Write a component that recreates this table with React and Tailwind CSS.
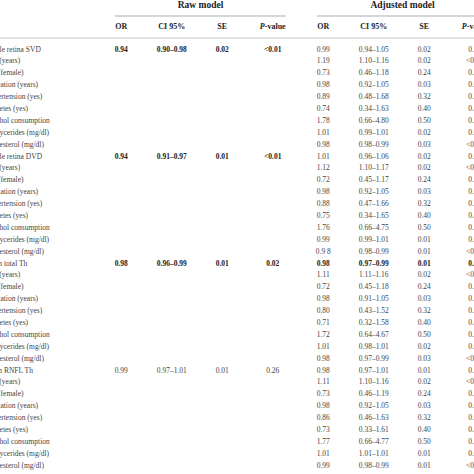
const covariates = [
  "Age (years)",
  "Sex (female)",
  "Education (years)",
  "Hypertension (yes)",
  "Diabetes (yes)",
  "Alcohol consumption",
  "Triglycerides (mg/dl)",
  "Cholesterol (mg/dl)",
];

const groups = [
  {
    label: "Whole retina SVD",
    raw: ["0.94", "0.90–0.98", "0.02", "<0.01"],
    rawBold: true,
    adj: [
      ["0.99", "0.94–1.05", "0.02", "0.74"],
      ["1.19", "1.10–1.16", "0.02", "<0.01"],
      ["0.73", "0.46–1.18", "0.24", "0.20"],
      ["0.98", "0.92–1.05", "0.03", "0.62"],
      ["0.89", "0.48–1.68", "0.32", "0.73"],
      ["0.74", "0.34–1.63", "0.40", "0.46"],
      ["1.78", "0.66–4.80", "0.50", "0.25"],
      ["1.01", "0.99–1.01", "0.02", "0.62"],
      ["0.98", "0.98–0.99", "0.03", "<0.01"],
    ],
  },
  {
    label: "Whole retina DVD",
    raw: ["0.94", "0.91–0.97", "0.01", "<0.01"],
    rawBold: true,
    adj: [
      ["1.01", "0.96–1.06", "0.02", "0.68"],
      ["1.12", "1.10–1.17", "0.02", "<0.01"],
      ["0.72", "0.45–1.17", "0.24", "0.18"],
      ["0.98", "0.92–1.05", "0.03", "0.61"],
      ["0.88", "0.47–1.66", "0.32", "0.70"],
      ["0.75", "0.34–1.65", "0.40", "0.47"],
      ["1.76", "0.66–4.75", "0.50", "0.26"],
      ["0.99", "0.99–1.01", "0.01", "0.64"],
      ["0.9 8", "0.98–0.99", "0.01", "<0.01"],
    ],
  },
  {
    label: "Mean total Th",
    raw: ["0.98", "0.96–0.99", "0.01", "0.02"],
    rawBold: true,
    adjBoldFirst: true,
    adj: [
      ["0.98", "0.97–0.99", "0.01", "0.03"],
      ["1.11", "1.11–1.16", "0.02", "<0.01"],
      ["0.72", "0.45–1.18", "0.24", "0.19"],
      ["0.98", "0.91–1.05", "0.03", "0.58"],
      ["0.80", "0.43–1.52", "0.32", "0.50"],
      ["0.71", "0.32–1.58", "0.40", "0.41"],
      ["1.72", "0.64–4.67", "0.50", "0.28"],
      ["1.01", "0.98–1.01", "0.02", "0.66"],
      ["0.98", "0.97–0.99", "0.03", "<0.01"],
    ],
  },
  {
    label: "Mean RNFL Th",
    raw: ["0.99", "0.97–1.01", "0.01", "0.26"],
    rawBold: false,
    adj: [
      ["0.98", "0.97–1.01", "0.01", "0.31"],
      ["1.11", "1.10–1.16", "0.02", "<0.01"],
      ["0.73", "0.46–1.19", "0.24", "0.21"],
      ["0.98", "0.92–1.05", "0.03", "0.60"],
      ["0.86", "0.46–1.63", "0.32", "0.65"],
      ["0.73", "0.33–1.61", "0.40", "0.44"],
      ["1.77", "0.66–4.77", "0.50", "0.26"],
      ["1.01", "1.01–1.01", "0.01", "0.63"],
      ["0.99", "0.98–0.99", "0.01", "<0.01"],
    ],
  },
];

const rowGrid = "grid grid-cols-[111px_repeat(8,50.5px)] h-[11.9px] leading-[11.9px]";

function Cell({ children, bold }) {
  return (
    <div className={`text-center whitespace-nowrap ${bold ? "font-bold text-[#222]" : ""}`}>
      {children}
    </div>
  );
}

function Row({ label, raw = ["", "", "", ""], adj, rawBold, adjBold }) {
  return (
    <div className={rowGrid}>
      <div className="whitespace-nowrap">{label}</div>
      {raw.map((v, i) => (
        <Cell key={"r" + i} bold={rawBold}>{v}</Cell>
      ))}
      {adj.map((v, i) => (
        <Cell key={"a" + i} bold={adjBold}>{v}</Cell>
      ))}
    </div>
  );
}

function ModelTitle({ title }) {
  return (
    <div className="w-[202px] flex flex-col">
      <div className="text-center pl-[19px] pr-[12px] text-[9.5px] leading-[11px] font-bold text-[#222]">
        {title}
      </div>
      <div className="mt-[4px] ml-[19px] mr-[12px] h-[1.5px] bg-[#d6d6d6]" />
    </div>
  );
}

export default function App() {
  const heads = ["OR", "CI 95%", "SE"];
  return (
    <div className="w-[474px] h-[474px] overflow-hidden bg-white text-[#444] font-['Liberation_Serif',_'Times_New_Roman',_serif] text-[7.5px]">
      <div className="ml-[-15px] w-[515px]">
        <div className="flex">
          <div className="w-[111px]" />
          <ModelTitle title="Raw model" />
          <ModelTitle title="Adjusted model" />
        </div>
        <div className="grid grid-cols-[111px_repeat(8,50.5px)] h-[20px] items-center text-[8px] font-bold text-[#222]">
          <div />
          {[0, 1].map((b) => (
            <>
              {heads.map((h) => (
                <div key={b + h} className="text-center whitespace-nowrap">{h}</div>
              ))}
              <div key={b + "p"} className="text-center whitespace-nowrap">
                <span className="italic">P</span>-value
              </div>
            </>
          ))}
        </div>
        <div className="h-[2px] bg-[#e2e2e2]" />
        <div className="pt-[5px]">
          {groups.map((g) => (
            <div key={g.label}>
              <Row
                label={g.label}
                raw={g.raw}
                rawBold={g.rawBold}
                adj={g.adj[0]}
                adjBold={g.adjBoldFirst}
              />
              {covariates.map((c, i) => (
                <Row key={c} label={c} adj={g.adj[i + 1]} />
              ))}
            </div>
          ))}
        </div>
      </div>
    </div>
  );
}
